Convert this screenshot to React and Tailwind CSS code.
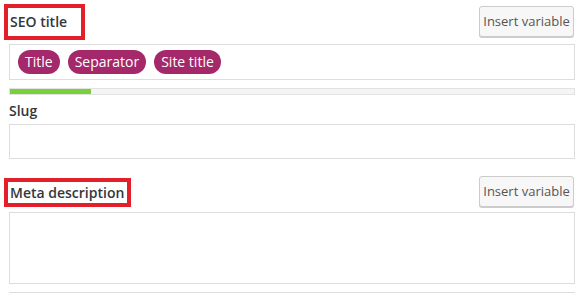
export default function App() {
  return (
    <div className="w-[587px] h-[293px] overflow-hidden bg-white font-['Open_Sans',sans-serif] text-[#23282d]">
      <div className="ml-[9px] w-[566px]">
        <FieldHeader label="SEO title" boxClass="h-[36px] pr-[14px]" />
        <div className="mt-[1px] h-[36px] border border-[#dddddd] pl-[8px] pt-[5px] flex gap-[8px]">
          <Pill>Title</Pill>
          <Pill>Separator</Pill>
          <Pill>Site title</Pill>
        </div>
        <div className="mt-[8px] h-[7px] border border-[#e2e2e2] bg-[#f5f5f5]">
          <div className="h-full w-[81px] bg-[#7ad03a]" />
        </div>
        <div className="h-[29px] flex items-center pt-[1px] text-[14px] font-semibold text-[#32373c]">Slug</div>
        <div className="h-[35px] border border-[#dddddd]" />
        <div className="mt-[17px]">
          <FieldHeader label="Meta description" boxClass="h-[29px] pr-[3px]" alignEnd />
        </div>
        <div className="mt-[5px] h-[72px] border border-[#dddddd]" />
        <div className="mt-[8px] h-[10px] border-t border-[#dddddd]" />
      </div>
    </div>
  );
}

function FieldHeader({ label, boxClass, alignEnd }) {
  return (
    <div className={alignEnd ? 'flex items-end justify-between' : 'h-[43px] flex items-center justify-between'}>
      <div className={`-ml-[5px] shrink-0 whitespace-nowrap border-4 border-[#e3202a] flex items-center pl-[2px] text-[14px] font-semibold text-[#32373c] leading-none ${boxClass}`}>
        {label}
      </div>
      <button className="h-[31px] w-[95px] rounded-[3px] border border-[#cccccc] bg-[#f7f7f7] shadow-[0_1px_0_#cccccc] text-[13px] text-[#555555] mr-[1px]">
        Insert variable
      </button>
    </div>
  );
}

function Pill({ children }) {
  return (
    <span className="h-[24px] px-[7px] rounded-full bg-[#a4286a] text-white text-[14px] leading-[24px]">
      {children}
    </span>
  );
}
